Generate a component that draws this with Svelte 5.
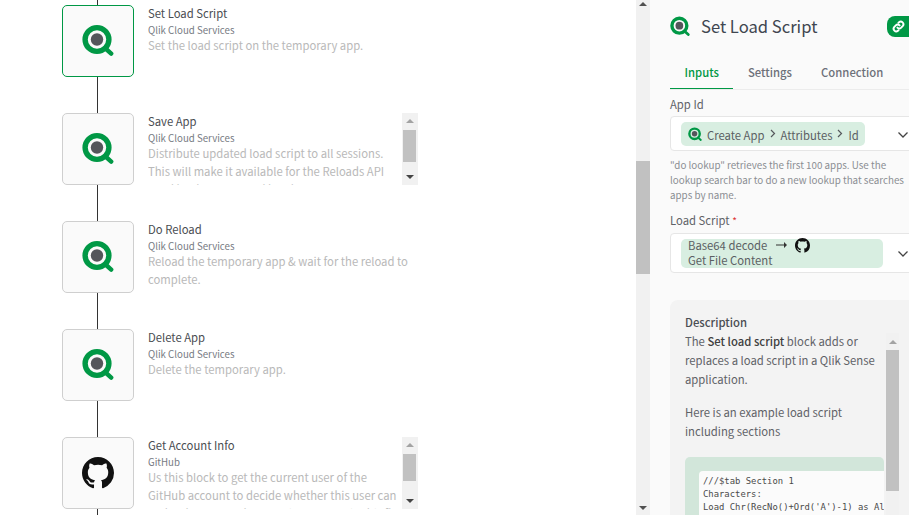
<script>
  const blocks = [
    { name: 'Set Load Script', app: 'Qlik Cloud Services', icon: 'qlik', active: true, lines: ['Set the load script on the temporary app.'] },
    { name: 'Save App', app: 'Qlik Cloud Services', icon: 'qlik', scroll: { top: 3, h: 32 }, lines: ['Distribute updated load script to all sessions.', 'This will make it available for the Reloads API', 'Load by the Do Reload block.'] },
    { name: 'Do Reload', app: 'Qlik Cloud Services', icon: 'qlik', lines: ['Reload the temporary app & wait for the reload to', 'complete.'] },
    { name: 'Delete App', app: 'Qlik Cloud Services', icon: 'qlik', lines: ['Delete the temporary app.'] },
    { name: 'Get Account Info', app: 'GitHub', icon: 'github', scroll: { top: 3, h: 27 }, lines: ['Us this block to get the current user of the', 'GitHub account to decide whether this user can', 'make changes to the repository or not in this flow'] }
  ];
  const ghPath = 'M8 0C3.58 0 0 3.58 0 8c0 3.54 2.29 6.53 5.47 7.59.4.07.55-.17.55-.38 0-.19-.01-.82-.01-1.49-2.01.37-2.53-.49-2.69-.94-.09-.23-.48-.94-.82-1.13-.28-.15-.68-.52-.01-.53.63-.01 1.08.58 1.23.82.72 1.21 1.87.87 2.33.66.07-.52.28-.87.51-1.07-1.78-.2-3.64-.89-3.64-3.95 0-.87.31-1.59.82-2.15-.08-.2-.36-1.02.08-2.12 0 0 .67-.21 2.2.82.64-.18 1.32-.27 2-.27.68 0 1.36.09 2 .27 1.53-1.04 2.2-.82 2.2-.82.44 1.1.16 1.92.08 2.12.51.56.82 1.27.82 2.15 0 3.07-1.87 3.75-3.65 3.95.29.25.54.73.54 1.48 0 1.07-.01 1.93-.01 2.2 0 .21.15.46.55.38A8.013 8.013 0 0016 8c0-4.42-3.58-8-8-8z';
</script>

{#snippet qlik(size)}
  <svg class="ico" width={size} height={size} viewBox="0 0 32 32">
    <circle cx="15" cy="15.5" r="11.9" fill="none" stroke="#009845" stroke-width="5.4" />
    <circle cx="15" cy="15.5" r="6.2" fill="#54565b" />
    <path d="M23 24 L29.2 29.6" stroke="#009845" stroke-width="4.4" stroke-linecap="round" />
  </svg>
{/snippet}

{#snippet github(size)}
  <svg class="ico" width={size} height={size} viewBox="0 0 16 16"><path d={ghPath} fill="#111" /></svg>
{/snippet}

{#snippet bar(thumb)}
  <div class="bar">
    <span class="up"></span>
    <div class="track"><div class="thumb" style="margin-top: {thumb.top}px; height: {thumb.h}px"></div></div>
    <span class="down"></span>
  </div>
{/snippet}

<div class="page">
  <div class="flow">
    <div class="line stub"></div>
    {#each blocks as b}
      <div class="block">
        <div class="tile" class:active={b.active} class:q={b.icon === 'qlik'}>
          {#if b.icon === 'qlik'}{@render qlik(32)}{:else}{@render github(32)}{/if}
        </div>
        <div class="info">
          <div class="text">
            <div class="name">{b.name}</div>
            <div class="app">{b.app}</div>
            {#each b.lines as l}<div class="desc">{l}</div>{/each}
          </div>
          {#if b.scroll}{@render bar(b.scroll)}{/if}
        </div>
      </div>
      <div class="line"></div>
    {/each}
  </div>

  <div class="pagebar">
    <span class="up"></span>
    <div class="track"><div class="thumb"></div></div>
    <span class="down"></span>
  </div>

  <div class="panel">
    <div class="head">
      {@render qlik(20)}
      <h1>Set Load Script</h1>
      <span class="link">
        <svg width="13" height="13" viewBox="0 0 24 24" fill="none" stroke="#fff" stroke-width="3.6" stroke-linecap="round">
          <path d="M10 14a5 5 0 0 0 7 0l3-3a5 5 0 0 0-7-7l-1 1" />
          <path d="M14 10a5 5 0 0 0-7 0l-3 3a5 5 0 0 0 7 7l1-1" />
        </svg>
      </span>
    </div>

    <div class="tabs">
      <span class="tab on">Inputs</span>
      <span class="tab">Settings</span>
      <span class="tab">Connection</span>
    </div>

    <div class="label first">App Id</div>
    <div class="select one">
      <div class="chip">
        {@render qlik(14)}
        <span class="t">Create App</span>
        <svg class="ico" width="6" height="9" viewBox="0 0 6 9" fill="none" stroke="#55585c" stroke-width="1.2"><path d="M1 1l3.5 3.5L1 8" /></svg>
        <span class="t">Attributes</span>
        <svg class="ico" width="6" height="9" viewBox="0 0 6 9" fill="none" stroke="#55585c" stroke-width="1.2"><path d="M1 1l3.5 3.5L1 8" /></svg>
        <span class="t">Id</span>
      </div>
      <svg class="chev" width="12" height="8" viewBox="0 0 12 8" fill="none" stroke="#444" stroke-width="1.3"><path d="M1.5 1.5 6 6l4.5-4.5" /></svg>
    </div>
    <p class="help">"do lookup" retrieves the first 100 apps. Use the lookup search bar to do a new lookup that searches apps by name.</p>

    <div class="label second">Load Script <b>*</b></div>
    <div class="select two">
      <div class="chip wide">
        <div class="row">
          Base64 decode
          <svg class="ico arrow" width="11" height="8" viewBox="0 0 11 8" fill="#333"><path d="M0 3.4h8V1l3 3-3 3V4.6H0z" /></svg>
          {@render github(15)}
        </div>
        <div>Get File Content</div>
      </div>
      <svg class="chev" width="12" height="8" viewBox="0 0 12 8" fill="none" stroke="#444" stroke-width="1.3"><path d="M1.5 1.5 6 6l4.5-4.5" /></svg>
    </div>

    <div class="card">
      <div class="cardhead">Description</div>
      <div class="cardbody">
        <div class="cardtext">
          <p>The <strong>Set load script</strong> block adds or replaces a load script in a Qlik Sense application.</p>
          <p>Here is an example load script including sections</p>
          <div class="quote">
            <pre>///$tab Section 1
Characters:
Load Chr(RecNo()+Ord('A')-1) as Alpha</pre>
          </div>
        </div>
        <div class="cardbar">
          <span class="up"></span>
          <div class="thumb"></div>
        </div>
      </div>
    </div>
  </div>
</div>

<style>
  :global(body) {
    margin: 0;
    background: #fff;
  }
  .page {
    display: flex;
    width: 909px;
    height: 515px;
    overflow: hidden;
    font-family: "Noto Sans CJK SC", "Open Sans", sans-serif;
    color: #404040;
  }
  .ico {
    flex: none;
  }
  .flow {
    width: 636px;
    flex: none;
    padding-left: 62px;
    box-sizing: border-box;
    height: 515px;
    overflow: hidden;
  }
  .line {
    width: 1px;
    height: 36px;
    margin-left: 35px;
    background: #333;
  }
  .line.stub {
    height: 5px;
  }
  .block {
    display: flex;
    height: 72px;
  }
  .tile {
    width: 72px;
    height: 72px;
    box-sizing: border-box;
    flex: none;
    display: flex;
    align-items: center;
    justify-content: center;
    background: #fafafa;
    border: 1px solid #cfcfcf;
    border-radius: 5px;
  }
  .tile.q {
    padding-bottom: 3px;
  }
  .tile.active {
    border-color: #009845;
  }
  .info {
    display: flex;
    width: 270px;
    margin-left: 14px;
    height: 72px;
    overflow: hidden;
  }
  .text {
    width: 254px;
    flex: none;
    white-space: nowrap;
    margin-top: -1px;
  }
  .name {
    font-size: 11.3px;
    line-height: 18px;
    color: #4a4d52;
  }
  .app {
    font-size: 9.7px;
    line-height: 13px;
    padding-top: 2px;
    margin-bottom: -1px;
    color: #767a82;
  }
  .desc {
    font-size: 11.3px;
    line-height: 18px;
    color: #b9b9b9;
  }
  .bar {
    width: 16px;
    height: 72px;
    flex: none;
    background: #f1f1f1;
    display: flex;
    flex-direction: column;
    align-items: center;
  }
  .bar .track {
    flex: 1;
    width: 100%;
  }
  .bar .thumb {
    width: 13px;
    margin-left: 1px;
    background: #c1c1c1;
  }
  .up, .down {
    flex: none;
    width: 0;
    height: 0;
    border-left: 4px solid transparent;
    border-right: 4px solid transparent;
  }
  .up {
    margin-top: 6px;
    margin-bottom: 4px;
    border-bottom: 4px solid #a3a3a3;
  }
  .down {
    margin-top: 4px;
    margin-bottom: 6px;
    border-top: 4px solid #444;
  }
  .pagebar {
    width: 14px;
    height: 515px;
    flex: none;
    background: #f1f1f1;
    display: flex;
    flex-direction: column;
    align-items: center;
  }
  .pagebar .up {
    margin-top: 2px;
    margin-bottom: 0;
    border-bottom-color: #505050;
  }
  .pagebar .track {
    flex: 1;
    width: 100%;
  }
  .pagebar .thumb {
    width: 100%;
    height: 113px;
    margin-top: 155px;
    background: #c1c1c1;
  }
  .pagebar .down {
    margin-bottom: 5px;
    border-top-color: #505050;
  }
  .panel {
    flex: none;
    width: 259px;
    box-sizing: content-box;
    padding-left: 20px;
    background: #fafafa;
    overflow: hidden;
    height: 515px;
  }
  .head {
    display: flex;
    align-items: center;
    height: 20px;
    margin-top: 16px;
    width: 300px;
    position: relative;
  }
  .head h1 {
    margin: 0 0 0 11px;
    font-size: 16.6px;
    font-weight: 400;
    line-height: 20px;
    color: #404650;
  }
  .link {
    position: absolute;
    left: 217px;
    top: 0;
    width: 40px;
    height: 21px;
    border-radius: 8px;
    background: #009845;
    display: flex;
    align-items: center;
    padding-left: 5px;
    box-sizing: border-box;
  }
  .tabs {
    display: flex;
    width: 260px;
    height: 54px;
    box-sizing: border-box;
    padding-top: 27px;
    border-bottom: 1px solid #ececec;
  }
  .tab {
    font-size: 11.3px;
    font-weight: 500;
    line-height: 18px;
    color: #6d7079;
    padding: 0 14.5px 7px;
  }
  .tab.on {
    color: #009845;
    border-bottom: 1px solid #009845;
    height: 26px;
    box-sizing: border-box;
  }
  .label {
    font-size: 11.3px;
    line-height: 16px;
    color: #5f6267;
  }
  .label.first {
    margin-top: 6px;
  }
  .label.second {
    margin-top: 9px;
  }
  .label b {
    color: #d33;
    font-weight: 400;
    font-size: 10px;
  }
  .select {
    display: flex;
    align-items: center;
    width: 260px;
    box-sizing: border-box;
    margin-top: 4px;
    padding-left: 10px;
    background: #fff;
    border: 1px solid #e6e6e6;
    border-radius: 4px;
    position: relative;
  }
  .select.one {
    height: 35px;
  }
  .select.two {
    height: 40px;
  }
  .chev {
    position: absolute;
    left: 226px;
    top: 50%;
    margin-top: -3px;
  }
  .chip {
    display: flex;
    align-items: center;
    gap: 5px;
    height: 24px;
    width: 184px;
    box-sizing: border-box;
    padding-left: 7px;
    background: #d8eee1;
    border-radius: 5px;
    font-size: 11.3px;
    color: #5b5f63;
    white-space: nowrap;
  }
  .chip .t {
    position: relative;
    top: 1px;
  }
  .chip.wide {
    display: block;
    width: 202px;
    height: 29px;
    line-height: 15px;
  }
  .row {
    display: flex;
    align-items: center;
    gap: 6px;
    height: 15px;
    margin-top: -1px;
  }
  .arrow {
    margin-left: 3px;
    margin-right: 2px;
  }
  .help {
    margin: 7px 0 0;
    width: 236px;
    font-size: 9.8px;
    line-height: 15px;
    color: #8b8e93;
  }
  .card {
    margin-top: 27px;
    width: 270px;
    height: 240px;
    box-sizing: border-box;
    padding: 14px 0 0 15px;
    background: #f3f3f3;
    border-radius: 8px;
  }
  .cardhead {
    font-size: 11.3px;
    font-weight: 500;
    line-height: 16px;
    color: #4a4d52;
  }
  .cardbody {
    display: flex;
    margin-top: 2px;
  }
  .cardtext {
    width: 199px;
    flex: none;
    font-size: 11.3px;
    line-height: 19px;
    color: #5f6267;
    overflow: hidden;
  }
  .cardtext p {
    margin: 0 0 14px;
    width: 195px;
  }
  .cardtext strong {
    font-weight: 500;
    color: #404040;
  }
  .quote {
    margin-top: 16px;
    padding: 14px 0 0 14px;
    background: #d2e6da;
    border-radius: 5px 5px 0 0;
    height: 80px;
  }
  .quote pre {
    margin: 0;
    height: 66px;
    padding: 4px 0 0 4px;
    background: #fbfbfb;
    border-radius: 4px 0 0 0;
    font-family: "DejaVu Sans Mono", monospace;
    font-size: 8.9px;
    line-height: 13px;
    color: #4a4a4a;
    box-sizing: border-box;
    overflow: hidden;
  }
  .cardbar {
    width: 13px;
    margin-left: 2px;
    margin-top: 1px;
    height: 200px;
    flex: none;
    display: flex;
    flex-direction: column;
    align-items: center;
    background: #f1f1f1;
  }
  .cardbar .up {
    margin-top: 7px;
    margin-bottom: 6px;
  }
  .cardbar .thumb {
    width: 100%;
    height: 141px;
    background: #c1c1c1;
  }
</style>
